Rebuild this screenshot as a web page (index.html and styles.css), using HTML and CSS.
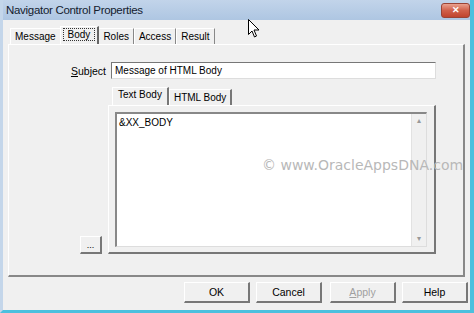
FILE: index.html
```html
<!DOCTYPE html>
<html lang="en">
<head>
    <meta charset="UTF-8">
    <title>Navigator Control Properties</title>
    <link rel="stylesheet" href="styles.css">
</head>
<body>
    <div class="window">
        <div class="titlebar">
            <span class="title">Navigator Control Properties</span>
            <span class="close-btn">&#x2715;</span>
        </div>

        <div class="content">
            <!-- main tabs -->
            <div class="tabs">
                <span class="tab">Message</span>
                <span class="tab active"><span class="focus">Body</span></span>
                <span class="tab">Roles</span>
                <span class="tab">Access</span>
                <span class="tab">Result</span>
            </div>

            <div class="panel">
                <div class="subject-row">
                    <label class="label"><u>S</u>ubject</label>
                    <div class="field">Message of HTML Body</div>
                </div>

                <div class="body-row">
                    <div class="dots-col">
                        <button class="dots-btn">...</button>
                    </div>
                    <div class="inner">
                        <div class="inner-tabs">
                            <span class="inner-tab active">Text Body</span>
                            <span class="inner-tab">HTML Body</span>
                        </div>
                        <div class="inner-panel">
                            <div class="textarea">
                                <div class="text">&amp;XX_BODY</div>
                                <div class="scrollbar">
                                    <span class="arrow">&#x25B4;</span>
                                    <span class="arrow">&#x25BE;</span>
                                </div>
                            </div>
                        </div>
                    </div>
                </div>
            </div>

            <!-- bottom buttons -->
            <div class="footer">
                <button class="btn">OK</button>
                <button class="btn">Cancel</button>
                <button class="btn disabled"><u>A</u>pply</button>
                <button class="btn">Help</button>
            </div>
        </div>

        <div class="watermark">&copy; www.OracleAppsDNA.com</div>
        <svg class="cursor" width="12" height="19" viewBox="0 0 12 19">
            <path d="M0.5 0.5 L0.5 15.5 L4 12 L6.5 18 L8.5 17 L6 11 L11 11 Z" fill="#fff" stroke="#000" stroke-width="1"/>
        </svg>
    </div>
</body>
</html>
```

FILE: styles.css
```css
body {
    margin: 0;
    padding: 0;
    font-family: "Liberation Sans", Arial, sans-serif;
    font-size: 10px;
    color: #000;
}

.window {
    position: relative;
    width: 474px;
    height: 313px;
    box-sizing: border-box;
    background: #f0f0f0;
    border-left: 3px solid #c4d6ea;
    border-right: 4px solid #4cc0de;
    border-bottom: 3px solid #4cc0de;
    overflow: hidden;
}

.titlebar {
    height: 20px;
    margin-left: -3px;
    margin-right: -4px;
    padding-left: 6px;
    display: flex;
    align-items: center;
    justify-content: space-between;
    background: linear-gradient(#c2d4ea, #aec6e2);
}

.title {
    font-size: 11.5px;
    letter-spacing: -0.3px;
    color: #14202e;
}

.close-btn {
    width: 27px;
    height: 13px;
    margin-right: 4px;
    border: 1px solid #9a4436;
    border-radius: 3px;
    background: linear-gradient(#eaa18f, #d0604a 50%, #c0442e);
    color: #fff;
    font-size: 9px;
    font-weight: bold;
    line-height: 13px;
    text-align: center;
}

.content {
    padding: 7px 5px 0 5px;
}

.tabs {
    display: flex;
    height: 17px;
    padding-left: 2px;
    align-items: flex-end;
}

.tab {
    height: 15px;
    padding: 0 4px;
    line-height: 16px;
    border-top: 1px solid #fff;
    border-left: 1px solid #fff;
    border-right: 1px solid #888;
}

.tab.active {
    height: 17px;
    margin: 0 -1px;
    padding: 0 2px;
    line-height: 15px;
    background: #f0f0f0;
    position: relative;
    z-index: 1;
    border-right: 2px solid #666;
}

.focus {
    border: 1px dotted #333;
    padding: 0 4px;
}

.panel {
    height: 233px;
    box-sizing: border-box;
    border-top: 1px solid #fff;
    border-left: 1px solid #fff;
    border-right: 2px solid #888;
    border-bottom: 2px solid #888;
    padding: 17px 27px 0 0;
}

.subject-row {
    display: flex;
    align-items: center;
    height: 17px;
}

.label {
    width: 97px;
    text-align: right;
    padding-right: 5px;
    font-size: 10.5px;
}

.field {
    flex: 1;
    height: 15px;
    line-height: 15px;
    padding-left: 3px;
    background: #fff;
    border-top: 1px solid #777;
    border-left: 1px solid #777;
    border-bottom: 1px solid #ddd;
    border-right: 1px solid #ddd;
}

.body-row {
    display: flex;
    margin-top: 9px;
}

.dots-col {
    width: 99px;
    display: flex;
    align-items: flex-end;
    justify-content: flex-end;
    padding-right: 6px;
    box-sizing: border-box;
}

.dots-btn {
    width: 22px;
    height: 18px;
    padding: 0;
    font-family: "Liberation Sans", Arial, sans-serif;
    font-size: 9px;
    line-height: 12px;
    background: #f0f0f0;
    border-top: 1px solid #fff;
    border-left: 1px solid #fff;
    border-right: 2px solid #777;
    border-bottom: 2px solid #777;
}

.inner {
    flex: 1;
}

.inner-tabs {
    display: flex;
    height: 17px;
    padding-left: 4px;
    align-items: flex-end;
}

.inner-tab {
    height: 15px;
    padding: 0 4px;
    line-height: 16px;
    border-top: 1px solid #fff;
    border-left: 1px solid #fff;
    border-right: 2px solid #777;
}

.inner-tab.active {
    height: 17px;
    line-height: 14px;
    padding: 0 5px;
}

.inner-panel {
    height: 149px;
    box-sizing: border-box;
    border-top: 1px solid #fff;
    border-left: 1px solid #fff;
    border-right: 2px solid #777;
    border-bottom: 2px solid #777;
    padding: 6px 7px 0 6px;
}

.textarea {
    display: flex;
    height: 135px;
    box-sizing: border-box;
    background: #fff;
    border-top: 2px solid #888;
    border-left: 2px solid #888;
    border-right: 1px solid #ddd;
    border-bottom: 1px solid #ddd;
}

.text {
    flex: 1;
    padding: 3px 2px;
}

.scrollbar {
    width: 14px;
    display: flex;
    flex-direction: column;
    justify-content: space-between;
    align-items: center;
    background: #f0f0f0;
    border-left: 1px solid #e2e2e2;
}

.arrow {
    color: #999;
    font-size: 8px;
    line-height: 14px;
}

.footer {
    display: flex;
    justify-content: flex-end;
    gap: 6px;
    margin-right: -3px;
    padding-top: 5px;
}

.btn {
    width: 66px;
    height: 21px;
    padding: 0;
    background: #f0f0f0;
    font-family: "Liberation Sans", Arial, sans-serif;
    font-size: 10.5px;
    border-top: 1px solid #fff;
    border-left: 1px solid #fff;
    border-right: 2px solid #777;
    border-bottom: 2px solid #777;
}

.btn.disabled {
    color: #a0a0a0;
    margin-left: 2px;
}

.watermark {
    position: absolute;
    left: 259px;
    top: 157px;
    color: #b8b8b8;
    font-family: "DejaVu Sans", sans-serif;
    font-size: 14px;
    white-space: nowrap;
}

.cursor {
    position: absolute;
    left: 245px;
    top: 19px;
}
```
